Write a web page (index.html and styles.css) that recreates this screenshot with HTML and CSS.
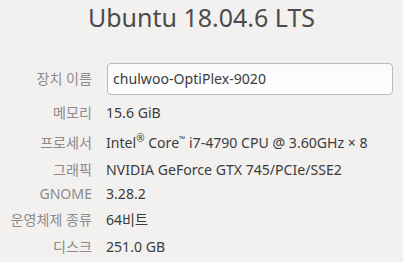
FILE: index.html
```html
<!DOCTYPE html>
<html lang="ko">
<head>
<meta charset="utf-8">
<link rel="stylesheet" href="styles.css">
</head>
<body>
<div class="page">
  <h1 class="title">Ubuntu 18.04.6 LTS</h1>
  <div class="info">
    <div class="row entry-row">
      <div class="label">장치 이름</div>
      <div class="entry">chulwoo-OptiPlex-9020</div>
    </div>
    <div class="row r-mem">
      <div class="label">메모리</div>
      <div class="value">15.6 GiB</div>
    </div>
    <div class="row r-cpu">
      <div class="label">프로세서</div>
      <div class="value">Intel<sup>®</sup> Core<sup class="tm">™</sup> i7-4790 CPU @ 3.60GHz × 8</div>
    </div>
    <div class="row r-gpu">
      <div class="label">그래픽</div>
      <div class="value">NVIDIA GeForce GTX 745/PCIe/SSE2</div>
    </div>
    <div class="row r-gnome">
      <div class="label">GNOME</div>
      <div class="value">3.28.2</div>
    </div>
    <div class="row r-os">
      <div class="label">운영체제 종류</div>
      <div class="value">64비트</div>
    </div>
    <div class="row r-disk">
      <div class="label">디스크</div>
      <div class="value">251.0 GB</div>
    </div>
  </div>
</div>
</body>
</html>
```

FILE: styles.css
```css
html, body {
  margin: 0;
  padding: 0;
  background: #f2f1f0;
}
body {
  font-family: "Noto Sans", "Noto Sans CJK KR", sans-serif;
  font-size: 14.1px;
  color: #3c3c3c;
  width: 403px;
  height: 262px;
  overflow: hidden;
}
.page {
  display: flex;
  flex-direction: column;
}
.title {
  margin: 0;
  font-weight: normal;
  font-size: 25px;
  line-height: 34px;
  color: #4c4c4c;
  text-align: center;
  height: 34px;
}
.info {
  display: flex;
  flex-direction: column;
  padding-top: 29px;
}
.row {
  display: flex;
  align-items: flex-start;
  column-gap: 14px;
  line-height: 20px;
}
.label {
  width: 92px;
  flex: none;
  text-align: right;
  color: #8c8b8a;
  white-space: nowrap;
}
.value {
  white-space: nowrap;
}
.entry-row {
  height: 32px;
  align-items: center;
}
.entry {
  box-sizing: border-box;
  width: 286px;
  height: 32px;
  margin-left: 1px;
  border: 1px solid #bdbab5;
  border-radius: 4px;
  background: linear-gradient(#fafafa, #ffffff);
  padding: 5px 5px 0 5px;
  line-height: 20px;
}
.r-mem { margin-top: 8px; height: 30px; }
.r-cpu { height: 27px; }
.r-gpu { height: 24px; }
.r-gnome { height: 26px; }
.r-os { height: 27px; }
.r-disk { height: 26px; }
sup {
  font-size: 10px;
  line-height: 0;
  vertical-align: 6px;
}
sup.tm {
  font-size: 8px;
}
```
